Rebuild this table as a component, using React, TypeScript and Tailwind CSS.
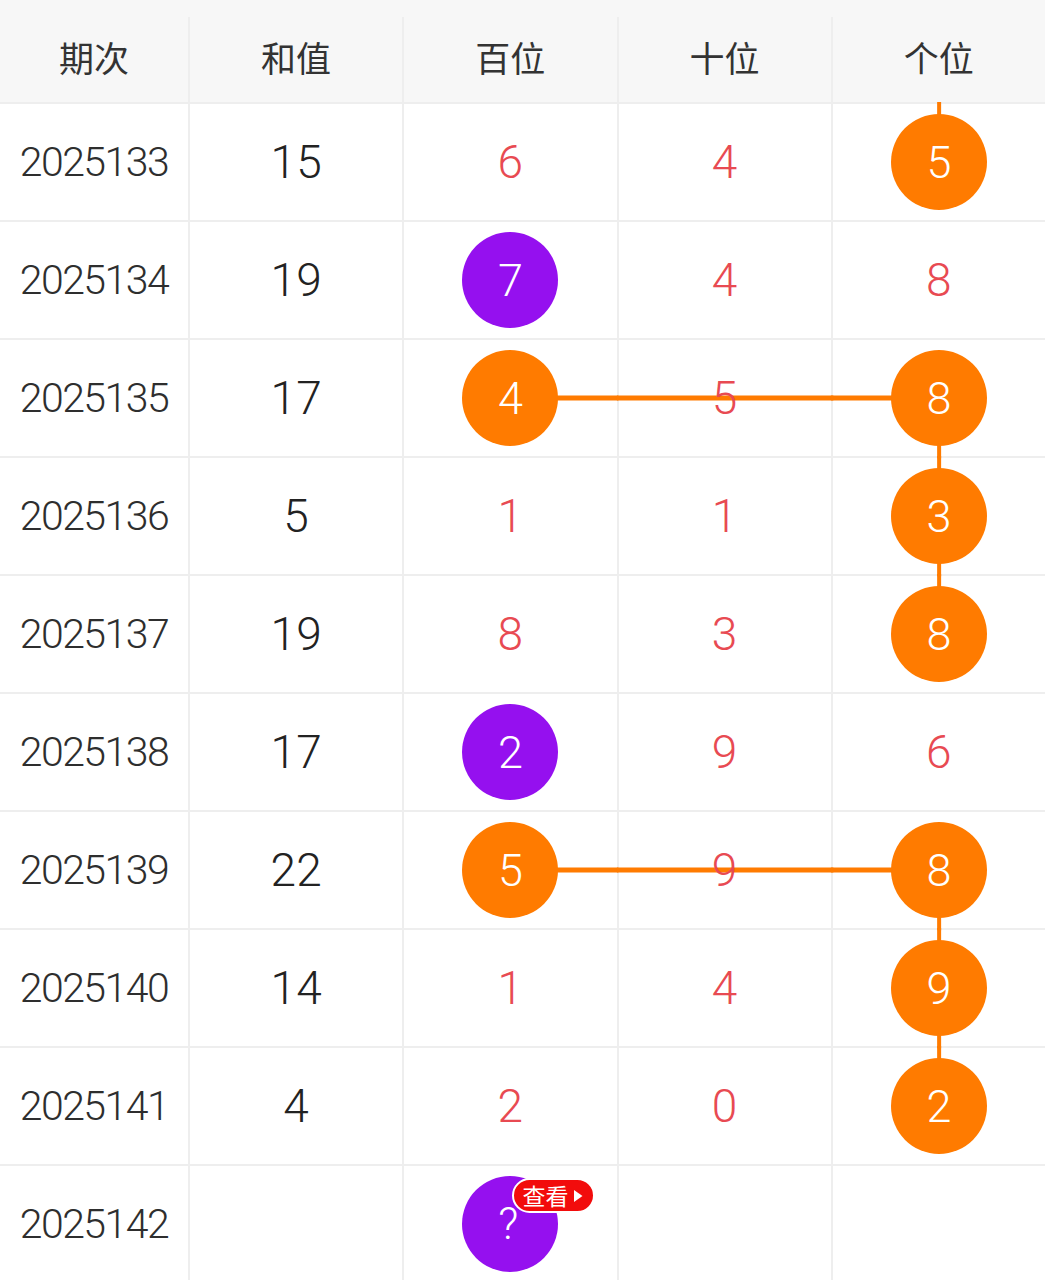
import React from "react";

type Mark = "o" | "p" | null;
type Link = "start" | "mid" | "end" | null;

type Row = {
  period: string;
  sum: string;
  digits: string[];
  marks: Mark[];
  up?: number[];
  down?: number[];
  h?: Link[];
  badge?: boolean;
};

const rows: Row[] = [
  { period: "2025133", sum: "15", digits: ["6", "4", "5"], marks: [null, null, "o"], up: [2] },
  { period: "2025134", sum: "19", digits: ["7", "4", "8"], marks: ["p", null, null] },
  {
    period: "2025135",
    sum: "17",
    digits: ["4", "5", "8"],
    marks: ["o", null, "o"],
    down: [2],
    h: ["start", "mid", "end"],
  },
  { period: "2025136", sum: "5", digits: ["1", "1", "3"], marks: [null, null, "o"], up: [2], down: [2] },
  { period: "2025137", sum: "19", digits: ["8", "3", "8"], marks: [null, null, "o"], up: [2] },
  { period: "2025138", sum: "17", digits: ["2", "9", "6"], marks: ["p", null, null] },
  {
    period: "2025139",
    sum: "22",
    digits: ["5", "9", "8"],
    marks: ["o", null, "o"],
    down: [2],
    h: ["start", "mid", "end"],
  },
  { period: "2025140", sum: "14", digits: ["1", "4", "9"], marks: [null, null, "o"], up: [2], down: [2] },
  { period: "2025141", sum: "4", digits: ["2", "0", "2"], marks: [null, null, "o"], up: [2] },
  { period: "2025142", sum: "", digits: ["?", "", ""], marks: ["p", null, null], badge: true },
];

const cjk = { fontFamily: '"Noto Sans CJK SC", "Noto Sans", sans-serif' };
const num = { fontFamily: 'Roboto, "Noto Sans CJK SC", sans-serif' };

const ORANGE = "#ff7b00";

// trend connectors drawn behind the balls
function Links({ up, down, h }: { up?: boolean; down?: boolean; h: Link }) {
  if (!up && !down && !h) return null;
  return (
    <svg className="absolute inset-0 z-[1] w-full h-full overflow-visible pointer-events-none">
      {up && <line x1="50%" y1="-2" x2="50%" y2="50%" stroke={ORANGE} strokeWidth="4" />}
      {down && <line x1="50%" y1="50%" x2="50%" y2="102%" stroke={ORANGE} strokeWidth="4" />}
      {h === "start" && <line x1="50%" y1="50%" x2="101%" y2="50%" stroke={ORANGE} strokeWidth="5" />}
      {h === "mid" && <line x1="-1%" y1="50%" x2="101%" y2="50%" stroke={ORANGE} strokeWidth="5" />}
      {h === "end" && <line x1="-1%" y1="50%" x2="50%" y2="50%" stroke={ORANGE} strokeWidth="5" />}
    </svg>
  );
}

function DigitCell({ row, i }: { row: Row; i: number }) {
  const mark = row.marks[i];

  return (
    <div className="relative bg-white h-[116px] flex items-center justify-center font-light" style={num}>
      <Links up={row.up?.includes(i)} down={row.down?.includes(i)} h={row.h ? row.h[i] : null} />
      {mark ? (
        <div
          className={
            "relative z-[2] w-24 h-24 rounded-full flex items-center justify-center text-white leading-none " +
            (mark === "o" ? "bg-[#ff7b00]" : "bg-[#9510ef]")
          }
        >
          {row.badge ? (
            <span className="text-[44px] mr-[4px]">?</span>
          ) : (
            <span className="text-[45px]">{row.digits[i]}</span>
          )}
          {row.badge && (
            <div
              className="absolute left-[50px] top-[2px] h-[35px] pl-[8px] pr-[10px] rounded-full bg-[#f20c0c] border-2 border-white flex items-center gap-[5px] whitespace-nowrap font-normal"
              style={cjk}
            >
              <span className="text-[23px] leading-none text-white">查看</span>
              <svg width="10" height="14" viewBox="0 0 10 14">
                <path d="M1 1 L9.5 7 L1 13 Z" fill="#fff" />
              </svg>
            </div>
          )}
        </div>
      ) : (
        <span className="relative z-[2] text-[46px] leading-none text-[#e84a52]">{row.digits[i]}</span>
      )}
    </div>
  );
}

export default function App() {
  const headers = ["期次", "和值", "百位", "十位", "个位"];
  return (
    <div className="w-[1045px] h-[1280px] overflow-hidden bg-[#f7f7f7] pt-[17px]" style={cjk}>
      <div className="grid grid-cols-[188px_1fr_1fr_1fr_1fr] gap-[2px] bg-[#eeeeee]">
        {headers.map((h) => (
          <div
            key={h}
            className="bg-[#f7f7f7] h-[85px] flex items-center justify-center text-[35px] text-[#333] pb-[4px]"
          >
            {h}
          </div>
        ))}
        {rows.map((row) => (
          <React.Fragment key={row.period}>
            <div
              className="bg-white h-[116px] flex items-center justify-center text-[41px] font-light leading-none tracking-[-1.5px] text-[#2e2e2e]"
              style={num}
            >
              {row.period}
            </div>
            <div
              className="bg-white h-[116px] flex items-center justify-center text-[46px] font-light leading-none text-[#222]"
              style={num}
            >
              {row.sum}
            </div>
            {[0, 1, 2].map((i) => (
              <DigitCell key={i} row={row} i={i} />
            ))}
          </React.Fragment>
        ))}
      </div>
    </div>
  );
}
